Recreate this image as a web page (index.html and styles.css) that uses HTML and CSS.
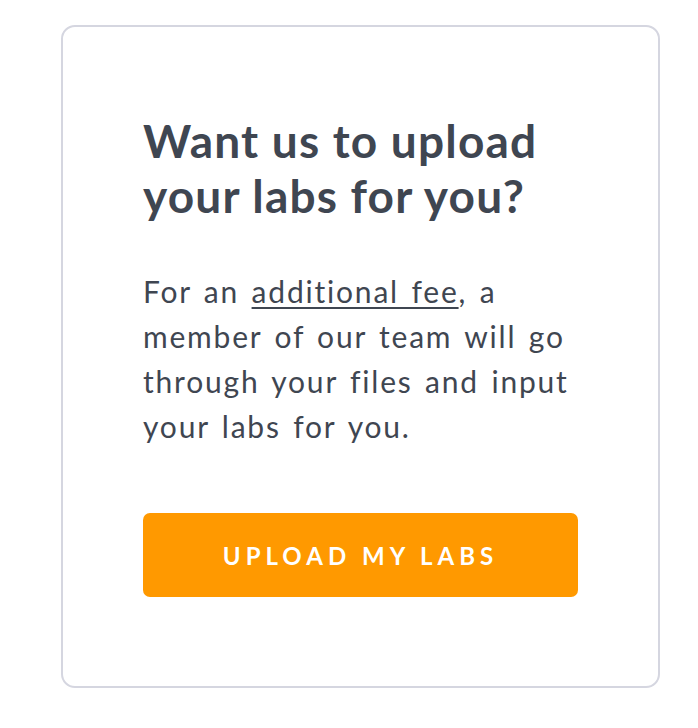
FILE: index.html
```html
<!DOCTYPE html>
<html lang="en">
<head>
<meta charset="utf-8">
<title>Upload labs</title>
<link rel="stylesheet" href="styles.css">
</head>
<body>
<div class="page">
  <section class="card">
    <h2 class="card-title">Want us to upload your labs for you?</h2>
    <p class="card-text">For an <a class="fee-link" href="#">additional fee</a>, a member of our team will go through your files and input your labs for you.</p>
    <button class="upload-btn" type="button">UPLOAD MY LABS</button>
  </section>
</div>
</body>
</html>
```

FILE: styles.css
```css
html, body {
  margin: 0;
  padding: 0;
  background: #ffffff;
}

body {
  font-family: Lato, "Open Sans", sans-serif;
  color: #3f4651;
}

.page {
  padding: 25px 0 0 61px;
}

.card {
  box-sizing: border-box;
  width: 599px;
  height: 663px;
  border: 2px solid #d5d6e0;
  border-radius: 14px;
  padding: 86px 80px 0 80px;
  display: flex;
  flex-direction: column;
  align-items: stretch;
}

.card-title {
  margin: 0;
  font-size: 46px;
  line-height: 55px;
  font-weight: 700;
  letter-spacing: 1.2px;
  color: #3f4651;
}

.card-text {
  margin: 46px 0 0 0;
  font-size: 30px;
  line-height: 45px;
  font-weight: 400;
  letter-spacing: 1.8px;
  word-spacing: 3px;
  color: #3f4651;
}

.fee-link {
  color: inherit;
  text-decoration: underline;
  text-decoration-thickness: 2px;
  text-underline-offset: 4px;
}

.upload-btn {
  margin-top: 64px;
  height: 84px;
  border: none;
  border-radius: 7px;
  background: #ff9900;
  color: #ffffff;
  font-family: Lato, "Open Sans", sans-serif;
  font-size: 24px;
  font-weight: 700;
  letter-spacing: 5px;
  cursor: pointer;
}
```
